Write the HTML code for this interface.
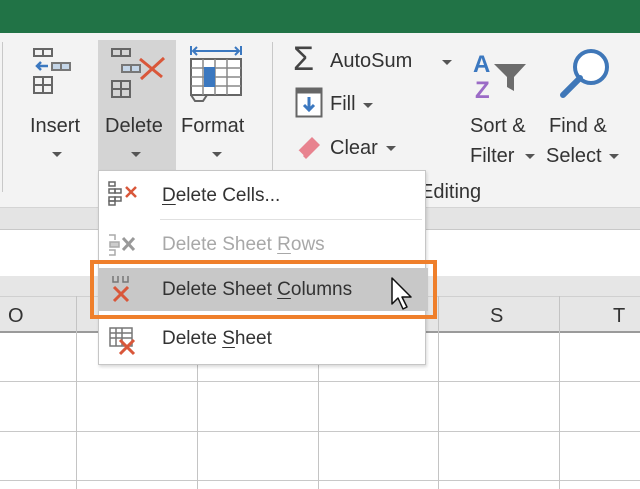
<!DOCTYPE html>
<html><head><style>
*{margin:0;padding:0;box-sizing:border-box}
body{width:640px;height:489px;overflow:hidden;background:#fff;font-family:"Liberation Sans","DejaVu Sans",sans-serif;position:relative;color:#333}
.a{position:absolute}
.t{font-size:20px;color:#333;white-space:nowrap}
.car{position:absolute;width:0;height:0;border-left:5px solid transparent;border-right:5px solid transparent;border-top:5px solid #555}
.mi{position:absolute;left:162px;font-size:19px;color:#333;white-space:nowrap}
u{text-decoration:underline;text-underline-offset:3px}
</style></head><body>
<div class="a" style="left:0;top:0;width:640px;height:33px;background:#217346"></div>
<div class="a" style="left:0;top:33px;width:640px;height:175px;background:#f3f3f3"></div>
<div class="a" style="left:0;top:207px;width:640px;height:23px;background:#e4e4e4;border-top:1px solid #d4d4d4;border-bottom:1px solid #c8c8c8"></div>
<div class="a" style="left:2px;top:42px;width:1px;height:150px;background:#c8c8c8"></div>
<div class="a" style="left:272px;top:42px;width:1px;height:150px;background:#c8c8c8"></div>
<!-- Delete highlight -->
<div class="a" style="left:98px;top:40px;width:78px;height:132px;background:#d4d4d4"></div>
<!-- Insert icon -->
<svg class="a" style="left:30px;top:45px" width="55" height="55" viewBox="0 0 55 55" fill="none" stroke="#666" stroke-width="2">
<rect x="4" y="4" width="9" height="7"/><rect x="13" y="4" width="9" height="7"/>
<rect x="22" y="18" width="9" height="7" fill="#c5d6e8" stroke="#777"/><rect x="31" y="18" width="9" height="7" fill="#c5d6e8" stroke="#777"/>
<path d="M18 21H7M11 17l-4 4 4 4" stroke="#3b78c0" stroke-width="2.5"/>
<rect x="4" y="32" width="9" height="8"/><rect x="13" y="32" width="9" height="8"/><rect x="4" y="40" width="9" height="8"/><rect x="13" y="40" width="9" height="8"/>
</svg>
<div class="t a" style="left:30px;top:115px">Insert</div>
<div class="car" style="left:52px;top:152px"></div>
<!-- Delete icon -->
<svg class="a" style="left:108px;top:45px" width="60" height="55" viewBox="0 0 60 55" fill="none" stroke="#666" stroke-width="2">
<rect x="4" y="4" width="9" height="7"/><rect x="13" y="4" width="9" height="7"/>
<rect x="14" y="20" width="9" height="7" fill="#c5d6e8" stroke="#777"/><rect x="23" y="20" width="9" height="7" fill="#c5d6e8" stroke="#777"/>
<path d="M32 14l22 18M56 13L33 34" stroke="#d9573a" stroke-width="3"/>
<rect x="4" y="36" width="9" height="8"/><rect x="13" y="36" width="9" height="8"/><rect x="4" y="44" width="9" height="8"/><rect x="13" y="44" width="9" height="8"/>
</svg>
<div class="t a" style="left:105px;top:115px">Delete</div>
<div class="car" style="left:131px;top:152px"></div>
<!-- Format icon -->
<svg class="a" style="left:188px;top:43px" width="60" height="62" viewBox="0 0 60 62" fill="none" stroke="#666" stroke-width="2">
<path d="M3 3v9M53 3v9M5 8h46M9 4l-4 4 4 4M47 4l4 4-4 4" stroke="#3b78c0" stroke-width="2"/>
<rect x="3" y="16" width="50" height="36" fill="#fff"/>
<path d="M3 25h50M3 34h50M3 43h50M15 16v36M27 16v36M39 16v36" stroke="#888" stroke-width="1.5"/>
<rect x="16" y="24" width="11" height="20" fill="#3b78c0" stroke="none"/>
<path d="M3 52l4 6h8l4-6" />
</svg>
<div class="t a" style="left:181px;top:115px">Format</div>
<div class="car" style="left:212px;top:152px"></div>
<!-- Editing -->
<div class="a" style="left:293px;top:42px;font-size:34px;color:#444;line-height:34px">&Sigma;</div>
<div class="t a" style="left:330px;top:50px">AutoSum</div>
<div class="car" style="left:442px;top:60px"></div>
<svg class="a" style="left:295px;top:87px" width="30" height="32" viewBox="0 0 30 32"><rect x="1.5" y="1.5" width="25" height="28" fill="#fff" stroke="#666" stroke-width="2"/><rect x="1.5" y="1.5" width="25" height="5" fill="#666"/><path d="M14 10v13M9 18l5 5 5-5" stroke="#3b78c0" stroke-width="3" fill="none"/></svg>
<div class="t a" style="left:330px;top:93px">Fill</div>
<div class="car" style="left:363px;top:103px"></div>
<svg class="a" style="left:295px;top:133px" width="30" height="26" viewBox="0 0 30 26"><path d="M3 18l14-14 8 8-14 14z" fill="#e8838f"/><path d="M3 18l5 5" stroke="#f3f3f3" stroke-width="2"/></svg>
<div class="t a" style="left:330px;top:137px">Clear</div>
<div class="car" style="left:386px;top:146px"></div>
<svg class="a" style="left:470px;top:48px" width="62" height="52" viewBox="0 0 62 52">
<text x="3" y="24" font-family="Liberation Sans" font-weight="bold" font-size="24" fill="#3b78c0">A</text>
<text x="5" y="50" font-family="Liberation Sans" font-weight="bold" font-size="24" fill="#9b6bc6">Z</text>
<path d="M24 16h32l-12 13v14l-7-4V29z" fill="#6c6c6c"/>
</svg>
<svg class="a" style="left:555px;top:45px" width="60" height="56" viewBox="0 0 60 56"><circle cx="36" cy="22" r="16" fill="#fff" stroke="#3f77b8" stroke-width="4"/><path d="M25 33L8 50" stroke="#3f77b8" stroke-width="6" stroke-linecap="round"/></svg>
<div class="t a" style="left:470px;top:115px">Sort &amp;</div>
<div class="t a" style="left:470px;top:145px">Filter</div>
<div class="car" style="left:525px;top:154px"></div>
<div class="t a" style="left:549px;top:115px">Find &amp;</div>
<div class="t a" style="left:546px;top:145px">Select</div>
<div class="car" style="left:609px;top:154px"></div>
<div class="t a" style="left:420px;top:181px">Editing</div>
<!-- sheet -->
<div class="a" style="left:0;top:276px;width:640px;height:57px;background:#e6e6e6;border-bottom:2px solid #9a9a9a"></div>
<div class="a" style="left:0;top:296px;width:640px;height:1px;background:#d0d0d0"></div>
<div class="a" style="left:0;top:381px;width:640px;height:1px;background:#c8c8c8"></div>
<div class="a" style="left:0;top:431px;width:640px;height:1px;background:#c8c8c8"></div>
<div class="a" style="left:0;top:480px;width:640px;height:1px;background:#c8c8c8"></div>
<div class="a" style="left:76px;top:296px;width:1px;height:193px;background:#c4c4c4"></div>
<div class="a" style="left:197px;top:296px;width:1px;height:193px;background:#c4c4c4"></div>
<div class="a" style="left:318px;top:296px;width:1px;height:193px;background:#c4c4c4"></div>
<div class="a" style="left:438px;top:296px;width:1px;height:193px;background:#c4c4c4"></div>
<div class="a" style="left:559px;top:296px;width:1px;height:193px;background:#c4c4c4"></div>
<div class="t a" style="left:8px;top:305px">O</div>
<div class="t a" style="left:490px;top:305px">S</div>
<div class="t a" style="left:613px;top:305px">T</div>
<!-- menu -->
<div class="a" style="left:98px;top:170px;width:328px;height:195px;background:#fff;border:1px solid #c6c6c6;box-shadow:1px 2px 3px rgba(0,0,0,.15)"></div>
<div class="a" style="left:160px;top:219px;width:262px;height:1px;background:#e0e0e0"></div>
<div class="a" style="left:90px;top:260px;width:347px;height:59px;border:4px solid #ef7f2b"></div>
<div class="a" style="left:98px;top:268px;width:330px;height:43px;background:#c8c8c8"></div>
<svg class="a" style="left:106px;top:180px" width="36" height="30" viewBox="0 0 36 30" fill="none" stroke="#666" stroke-width="1.5"><rect x="3" y="2" width="6" height="4"/><rect x="3" y="9" width="6" height="4"/><rect x="9" y="9" width="6" height="4"/><rect x="3" y="17" width="6" height="4"/><rect x="9" y="17" width="6" height="4"/><rect x="3" y="21" width="6" height="4"/><path d="M20 7l10 10M30 7L20 17" stroke="#d9573a" stroke-width="2.5"/></svg>
<div class="mi" style="top:185px"><u>D</u>elete Cells...</div>
<svg class="a" style="left:106px;top:230px" width="36" height="30" viewBox="0 0 36 30" fill="none" stroke="#aaa" stroke-width="1.5"><path d="M3 5h6v5M3 20h6v5H3"/><rect x="4" y="12" width="9" height="5" fill="#ccc"/><path d="M17 8l11 12M28 8L17 20" stroke="#999" stroke-width="3"/></svg>
<div class="mi" style="top:234px;color:#a8a8a8">Delete Sheet <u>R</u>ows</div>
<svg class="a" style="left:108px;top:274px" width="30" height="32" viewBox="0 0 30 32" fill="none" stroke="#777" stroke-width="1.5"><path d="M5 2v6h5V2M15 2v6h5V2"/><path d="M6 13l14 14M20 13L6 27" stroke="#d9573a" stroke-width="3"/></svg>
<div class="mi" style="top:279px">Delete Sheet <u>C</u>olumns</div>
<svg class="a" style="left:106px;top:325px" width="36" height="32" viewBox="0 0 36 32" fill="none" stroke="#777" stroke-width="1.5"><rect x="4" y="3" width="22" height="18"/><path d="M4 8h22M4 13h22M10 3v18M16 3v18"/><path d="M14 15l14 14M28 15L14 29" stroke="#d9573a" stroke-width="3"/></svg>
<div class="mi" style="top:328px">Delete <u>S</u>heet</div>
<!-- cursor -->
<svg class="a" style="left:390px;top:276px" width="26" height="36" viewBox="0 0 26 36"><path d="M2 2v26l6-6 5 11 4-2-5-10h9z" fill="#fff" stroke="#111" stroke-width="1.5" stroke-linejoin="round"/></svg>
</body></html>
